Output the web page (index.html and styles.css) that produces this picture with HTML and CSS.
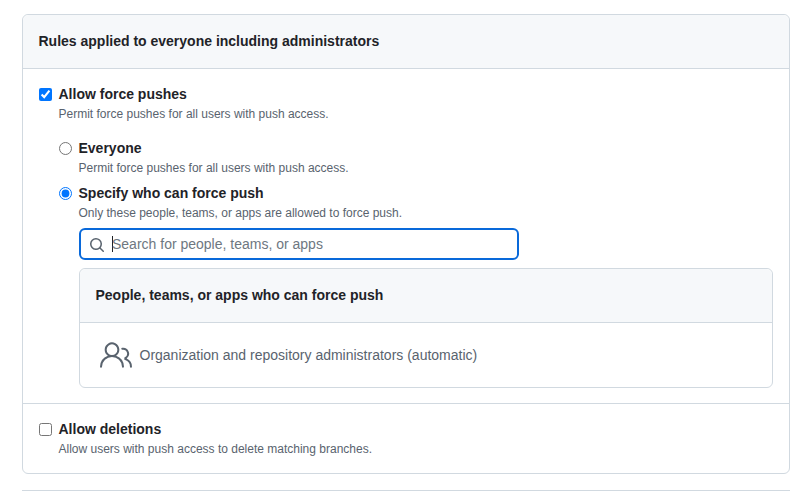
FILE: index.html
```html
<!DOCTYPE html>
<html lang="en">
<head>
<meta charset="utf-8">
<title>Rules</title>
<link rel="stylesheet" href="styles.css">
</head>
<body>
<section class="box">
  <header class="box-header">Rules applied to everyone including administrators</header>
  <div class="box-row force">
    <div class="option">
      <input type="checkbox" class="control" checked>
      <div>
        <div class="label">Allow force pushes</div>
        <div class="note">Permit force pushes for all users with push access.</div>
      </div>
    </div>
    <div class="sub">
      <div class="option">
        <input type="radio" name="who" class="control">
        <div>
          <div class="label">Everyone</div>
          <div class="note">Permit force pushes for all users with push access.</div>
        </div>
      </div>
      <div class="option second">
        <input type="radio" name="who" class="control" checked>
        <div class="grow">
          <div class="label">Specify who can force push</div>
          <div class="note">Only these people, teams, or apps are allowed to force push.</div>
        </div>
      </div>
      <div class="nested">
        <div class="search">
          <svg class="search-icon" viewBox="0 0 16 16" width="16" height="16" aria-hidden="true"><path fill="#59636e" d="M10.68 11.74a6 6 0 0 1-7.922-8.982 6 6 0 0 1 8.982 7.922l3.04 3.04a.749.749 0 0 1-.326 1.275.749.749 0 0 1-.734-.215ZM11.5 7a4.499 4.499 0 1 0-8.997 0A4.499 4.499 0 0 0 11.5 7Z"/></svg>
          <span class="caret"></span>
          <span class="placeholder">Search for people, teams, or apps</span>
        </div>
        <div class="inner">
          <div class="inner-header">People, teams, or apps who can force push</div>
          <div class="inner-row">
            <svg viewBox="0 0 24 24" width="32" height="32" aria-hidden="true"><path fill="#59636e" d="M3.5 8a5.5 5.5 0 1 1 8.596 4.547 9.005 9.005 0 0 1 5.9 8.18.751.751 0 0 1-1.5.045 7.5 7.5 0 0 0-14.993 0 .75.75 0 0 1-1.499-.044 9.005 9.005 0 0 1 5.9-8.181A5.496 5.496 0 0 1 3.5 8ZM9 4a4 4 0 1 0 0 8 4 4 0 0 0 0-8Zm8.29 4c-.148 0-.292.01-.434.03a.75.75 0 1 1-.212-1.484 4.53 4.53 0 0 1 3.38 8.097 6.69 6.69 0 0 1 3.956 6.107.75.75 0 0 1-1.5 0 5.193 5.193 0 0 0-3.696-4.972l-.534-.16v-1.676l.41-.209A3.03 3.03 0 0 0 17.29 8Z"/></svg>
            <span class="inner-text">Organization and repository administrators (automatic)</span>
          </div>
        </div>
      </div>
    </div>
  </div>
  <div class="box-row deletions">
    <div class="option">
      <input type="checkbox" class="control">
      <div>
        <div class="label">Allow deletions</div>
        <div class="note">Allow users with push access to delete matching branches.</div>
      </div>
    </div>
  </div>
</section>
<hr class="rule">
</body>
</html>
```
FILE: styles.css
```css
* { box-sizing: border-box; }
html, body { margin: 0; height: 100%; overflow: hidden; }
body {
  padding: 14px 16px 0 21.5px;
  background: #fff;
  color: #1f2328;
  font-family: "Liberation Sans", Arial, sans-serif;
  font-size: 14px;
  line-height: 21px;
}
.box { border: 1px solid #d1d9e0; border-radius: 6px; }
.box-header {
  height: 54px;
  padding: 16px;
  background: #f6f8fa;
  border-bottom: 1px solid #d1d9e0;
  border-radius: 6px 6px 0 0;
  font-weight: 700;
}
.force { height: 335px; padding: 15px 16px 16px; border-bottom: 1px solid #d1d9e0; }
.deletions { height: 69px; padding: 15px 16px; }
.option { display: flex; align-items: flex-start; }
.control { flex: none; width: 13px; height: 13px; margin: 4px 7px 0 0; }
.label { font-weight: 700; height: 21px; }
.note { color: #59636e; font-size: 12px; line-height: 18px; }
.sub { margin: 15px 0 0 20px; }
.second { margin-top: 6px; }
.grow { flex: 1; }
.nested { margin-left: 20px; }
.search {
  display: flex;
  align-items: center;
  width: 440px;
  height: 32px;
  margin-top: 6px;
  padding-left: 8px;
  border: 2px solid #0969da;
  border-radius: 6px;
  font-size: 14px;
}
.search-icon { flex: none; margin: 1px 7px 0 0; }
.caret { width: 1px; height: 16px; margin-right: -0.5px; background: #1f2328; }
.placeholder { color: #6e7781; }
.inner { margin-top: 8px; border: 1px solid #d1d9e0; border-radius: 6px; }
.inner-header {
  height: 54px;
  padding: 16px;
  background: #f6f8fa;
  border-bottom: 1px solid #d1d9e0;
  border-radius: 6px 6px 0 0;
  font-weight: 700;
}
.inner-row { display: flex; align-items: center; gap: 8px; height: 64px; padding-left: 20px; }
.inner-text { color: #59636e; }
.rule { height: 1px; margin: 16px 0 0; border: 0; background: #d1d9e0; }
```
